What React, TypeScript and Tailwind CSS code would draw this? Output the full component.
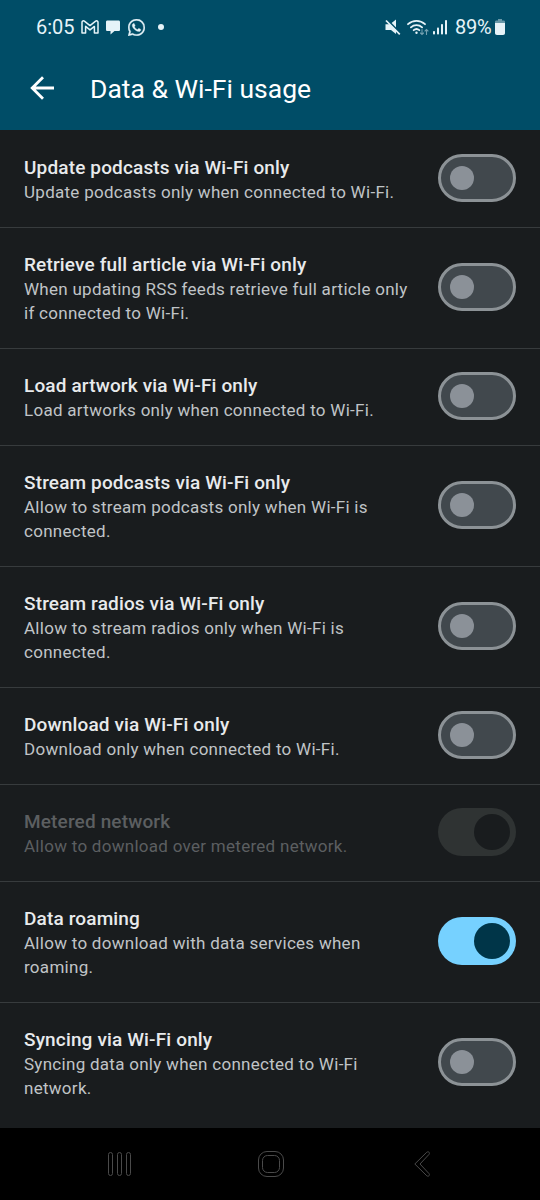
import { useState } from "react";

interface Setting {
  title: string;
  lines: string[];
  on?: boolean;
  disabled?: boolean;
}

const initialSettings: Setting[] = [
  {
    title: "Update podcasts via Wi-Fi only",
    lines: ["Update podcasts only when connected to Wi-Fi."],
  },
  {
    title: "Retrieve full article via Wi-Fi only",
    lines: [
      "When updating RSS feeds retrieve full article only",
      "if connected to Wi-Fi.",
    ],
  },
  {
    title: "Load artwork via Wi-Fi only",
    lines: ["Load artworks only when connected to Wi-Fi."],
  },
  {
    title: "Stream podcasts via Wi-Fi only",
    lines: ["Allow to stream podcasts only when Wi-Fi is", "connected."],
  },
  {
    title: "Stream radios via Wi-Fi only",
    lines: ["Allow to stream radios only when Wi-Fi is", "connected."],
  },
  {
    title: "Download via Wi-Fi only",
    lines: ["Download only when connected to Wi-Fi."],
  },
  {
    title: "Metered network",
    lines: ["Allow to download over metered network."],
    on: true,
    disabled: true,
  },
  {
    title: "Data roaming",
    lines: ["Allow to download with data services when", "roaming."],
    on: true,
  },
  {
    title: "Syncing via Wi-Fi only",
    lines: ["Syncing data only when connected to Wi-Fi", "network."],
  },
];

const StatusBar = () => (
  <div className="flex h-[54px] items-center justify-between pl-9 pr-[35px] text-[#e6f3f8]">
    <div className="flex items-center">
      <span className="w-[45px] text-[20px] leading-6 whitespace-nowrap">6:05</span>
      <svg width="18" height="14" viewBox="0 0 18 14" fill="none" stroke="currentColor" strokeWidth="1.5" strokeLinejoin="round">
        <path d="M1 13V2.300C1 .9 2.400.5 3.400 1.200L9 5.600l5.600-4.400C15.600.5 17 .9 17 2.300V13h-3.600V6.400L9 9.900 4.600 6.400V13z" />
      </svg>
      <svg className="ml-[6px]" width="16" height="15" viewBox="0 0 16 15" fill="currentColor">
        <path d="M2.500.5h11c1 0 1.500.6 1.500 1.500v7.500c0 1-.5 1.500-1.500 1.500H9.500L5.500 14.500V11h-3C1.500 11 1 10.500 1 9.500V2C1 1 1.500.5 2.500.5z" />
      </svg>
      <svg className="ml-[7px]" width="17" height="17" viewBox="0 0 24 24" fill="currentColor" stroke="currentColor" strokeWidth=".5">
        <path d="M17.472 14.382c-.297-.149-1.758-.867-2.030-.967-.273-.099-.471-.148-.67.150-.197.297-.767.966-.940 1.164-.173.199-.347.223-.644.075-.297-.150-1.255-.463-2.390-1.475-.883-.788-1.480-1.761-1.653-2.059-.173-.297-.018-.458.130-.606.134-.133.298-.347.446-.520.149-.174.198-.298.298-.497.099-.198.050-.371-.025-.520-.075-.149-.669-1.612-.916-2.207-.242-.579-.487-.500-.669-.510-.173-.008-.371-.010-.570-.010-.198 0-.520.074-.792.372-.272.297-1.040 1.016-1.040 2.479 0 1.462 1.065 2.875 1.213 3.074.149.198 2.096 3.200 5.077 4.487.709.306 1.262.489 1.694.625.712.227 1.360.195 1.871.118.571-.085 1.758-.719 2.006-1.413.248-.694.248-1.289.173-1.413-.074-.124-.272-.198-.570-.347m-5.421 7.403h-.004a9.870 9.870 0 01-5.031-1.378l-.361-.214-3.741.982.998-3.648-.235-.374a9.860 9.860 0 01-1.510-5.260c.001-5.450 4.436-9.884 9.888-9.884 2.640 0 5.122 1.030 6.988 2.898a9.825 9.825 0 012.893 6.994c-.003 5.450-4.437 9.884-9.885 9.884m8.413-18.297A11.815 11.815 0 0012.050 0C5.495 0 .160 5.335.157 11.892c0 2.096.547 4.142 1.588 5.945L.057 24l6.305-1.654a11.882 11.882 0 005.683 1.448h.005c6.554 0 11.890-5.335 11.893-11.893a11.821 11.821 0 00-3.480-8.413z" />
      </svg>
      <span className="ml-[13px] size-1.5 rounded-full bg-current" />
    </div>
    <div className="flex items-center">
      {/* muted speaker */}
      <svg width="16" height="16" viewBox="0 0 16 16" fill="currentColor">
        <path d="M.5 5.200H5L11 .5v14.500L6 11H.5z" />
        <path d="M2 .8 16 14.800" stroke="#004d67" strokeWidth="2" />
        <path d="M1 1.500 14.800 15.300" stroke="currentColor" strokeWidth="1.700" />
      </svg>
      <svg className="ml-[6px]" width="22" height="17" viewBox="0 0 22 17" fill="none" stroke="currentColor" strokeWidth="1.800" strokeLinecap="round">
        <path d="M1 5.200a12.500 12.500 0 0 1 17 0M3.900 8.300a8.200 8.200 0 0 1 11.200 0M6.700 11.200a4.200 4.200 0 0 1 5.600 0" />
        <circle cx="9.500" cy="13.800" r="1.200" fill="currentColor" stroke="none" />
        <path d="M15 10.500v5m-1.500-1.500 1.500 1.500 1.500-1.500M19.500 15.500v-5m-1.500 1.500 1.500-1.500 1.500 1.500" strokeWidth="1.100" opacity=".5" />
      </svg>
      <svg className="ml-1" width="15" height="16" viewBox="0 0 15 16" fill="currentColor">
        <rect x="0" y="12" width="2" height="3.500" rx=".8" />
        <rect x="4" y="8.500" width="2" height="7" rx=".8" />
        <rect x="8" y="5" width="2" height="10.500" rx=".8" />
        <rect x="12" y="1" width="2" height="14.500" rx=".8" />
      </svg>
      <span className="ml-[7px] w-10 text-[20px] leading-6 tracking-[-0.3px] whitespace-nowrap">89%</span>
      <svg width="10" height="16" viewBox="0 0 10 16" fill="currentColor">
        <path d="M3 0h4v1.500h1.500C9.500 1.500 10 2 10 3v1.500H0V3c0-1 .5-1.500 1.500-1.500H3z" opacity=".45" />
        <path d="M0 4h10v10c0 1.300-.7 2-2 2H2c-1.300 0-2-.7-2-2z" />
      </svg>
    </div>
  </div>
);

interface SwitchProps {
  on?: boolean;
  disabled?: boolean;
  label: string;
  onClick: () => void;
}

const Switch = ({ on, disabled, label, onClick }: SwitchProps) => {
  if (!on) {
    return (
      <button
        role="switch"
        aria-checked={false}
        aria-label={label}
        onClick={onClick}
        className="-mt-1 flex h-12 w-[78px] shrink-0 items-center rounded-full border-[3px] border-[#8c9296] bg-[#41484d] pl-[9px]"
      >
        <span className="size-6 rounded-full bg-[#8b9198]" />
      </button>
    );
  }
  return (
    <button
      role="switch"
      aria-checked={true}
      aria-label={label}
      disabled={disabled}
      onClick={onClick}
      className={`-mt-1 flex h-12 w-[78px] shrink-0 items-center justify-end rounded-full pr-1.5 ${
        disabled ? "bg-[#2f3333]" : "bg-[#76d1ff]"
      }`}
    >
      <span
        className={`size-9 rounded-full ${disabled ? "bg-[#191c1e]" : "bg-[#003548]"}`}
      />
    </button>
  );
};

const NavBar = () => (
  <nav className="flex h-[72px] items-center justify-between bg-black pl-[107px] pr-[108px] text-[#4a4a4a]">
    <svg width="24" height="26" viewBox="0 0 24 26" fill="none" stroke="currentColor">
      <rect x="1.500" y="1.500" width="4" height="23" rx="2" />
      <rect x="10.500" y="1.500" width="4" height="23" rx="2" />
      <rect x="19.500" y="1.500" width="4" height="23" rx="2" />
    </svg>
    <svg className="mr-1" width="26" height="26" viewBox="0 0 26 26" fill="none" stroke="currentColor">
      <rect x=".5" y=".5" width="25" height="25" rx="8.500" />
      <rect x="4.500" y="4.500" width="17" height="17" rx="5" />
    </svg>
    <svg width="18" height="26" viewBox="0 0 18 26" fill="none" stroke="currentColor">
      <path d="M.8 13 12.800 1.200c1.700-1.200 3.500.6 2.200 2.200L6 13l9 9.600c1.300 1.600-.5 3.400-2.200 2.200z" />
    </svg>
  </nav>
);

const App = () => {
  const [settings, setSettings] = useState(initialSettings);

  const toggle = (title: string) => {
    setSettings(
      settings.map((item) =>
        item.title === title ? { ...item, on: !item.on } : item
      )
    );
  };

  return (
    <div className="flex h-[1200px] w-[540px] flex-col overflow-hidden bg-[#191c1e] font-[Roboto,sans-serif]">
      <header className="h-[130px] shrink-0 bg-[#004d67]">
        <StatusBar />
        <div className="flex h-[68px] items-center pl-[30px] text-white">
          <svg width="25" height="24" viewBox="0 0 25 24" fill="none" stroke="currentColor" strokeWidth="2.800">
            <path d="M24 12H2.500M13 1.200 2.200 12 13 22.800" />
          </svg>
          <h1 className="mt-0.5 ml-[35px] text-[26.5px] leading-8 whitespace-nowrap">Data & Wi-Fi usage</h1>
        </div>
      </header>
      <ul className="flex-1 pt-px">
        {settings.map((item) => (
          <li
            key={item.title}
            className="flex items-center justify-between border-b border-[#373b3d] px-6 pt-[25px] pb-[23px] last:border-b-0"
          >
            <div
              className={`text-[17px] leading-6 whitespace-nowrap ${
                item.disabled ? "text-[#5c5f61]" : "text-[#c0c4c7]"
              }`}
            >
              <h2
                className={`text-[19px] leading-6 font-medium tracking-[0.15px] ${
                  item.disabled ? "" : "text-[#e8eaec]"
                }`}
              >
                {item.title}
              </h2>
              {item.lines.map((line) => (
                <p key={line} className="tracking-[0.28px]">
                  {line}
                </p>
              ))}
            </div>
            <Switch
              on={item.on}
              disabled={item.disabled}
              label={item.title}
              onClick={() => toggle(item.title)}
            />
          </li>
        ))}
      </ul>
      <NavBar />
    </div>
  );
};

export default App;
